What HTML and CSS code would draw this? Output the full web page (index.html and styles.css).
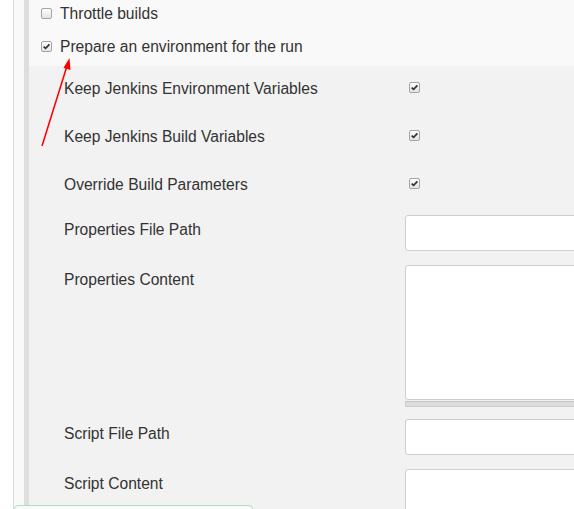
FILE: index.html
```html
<!DOCTYPE html>
<html>
<head>
<meta charset="utf-8">
<link rel="stylesheet" href="styles.css">
</head>
<body>
<div class="outer">
  <div class="panel">
    <div class="section">
      <div class="top-row row-throttle">
        <span class="cb"></span>
        <span class="top-label">Throttle builds</span>
      </div>
      <div class="top-row row-prepare">
        <span class="cb checked"><svg viewBox="0 0 11 11" width="11" height="11"><path d="M2.6 5.6 L4.6 7.4 L8.4 3.4" fill="none" stroke="#333" stroke-width="1.7"/></svg></span>
        <span class="top-label">Prepare an environment for the run</span>
      </div>
      <div class="nested">
        <div class="frow cbrow">
          <div class="flabel">Keep Jenkins Environment Variables</div>
          <div class="fctrl"><span class="cb checked"><svg viewBox="0 0 11 11" width="11" height="11"><path d="M2.6 5.6 L4.6 7.4 L8.4 3.4" fill="none" stroke="#333" stroke-width="1.7"/></svg></span></div>
        </div>
        <div class="frow cbrow">
          <div class="flabel">Keep Jenkins Build Variables</div>
          <div class="fctrl"><span class="cb checked"><svg viewBox="0 0 11 11" width="11" height="11"><path d="M2.6 5.6 L4.6 7.4 L8.4 3.4" fill="none" stroke="#333" stroke-width="1.7"/></svg></span></div>
        </div>
        <div class="frow cbrow">
          <div class="flabel">Override Build Parameters</div>
          <div class="fctrl"><span class="cb checked"><svg viewBox="0 0 11 11" width="11" height="11"><path d="M2.6 5.6 L4.6 7.4 L8.4 3.4" fill="none" stroke="#333" stroke-width="1.7"/></svg></span></div>
        </div>
        <div class="frow inrow">
          <div class="flabel">Properties File Path</div>
          <div class="fctrl"><div class="textbox"></div></div>
        </div>
        <div class="frow inrow tarow">
          <div class="flabel">Properties Content</div>
          <div class="fctrl"><div class="textarea"></div><div class="handle"></div></div>
        </div>
        <div class="frow inrow">
          <div class="flabel">Script File Path</div>
          <div class="fctrl"><div class="textbox"></div></div>
        </div>
        <div class="frow inrow">
          <div class="flabel">Script Content</div>
          <div class="fctrl"><div class="textarea"></div></div>
        </div>
      </div>
    </div>
  </div>
</div>
<div class="savebar"></div>
<svg class="arrow" width="80" height="160" viewBox="0 0 80 160">
  <line x1="42" y1="146" x2="67" y2="66" stroke="#ff0000" stroke-width="1.6"/>
  <polygon points="69.5,58 70.5,70 63.5,67.8" fill="#ff0000"/>
</svg>
</body>
</html>
```
FILE: styles.css
```css
html, body {
  margin: 0;
  padding: 0;
  overflow: hidden;
  background: #ffffff;
}
body {
  font-family: "Liberation Sans", Arial, Helvetica, sans-serif;
  font-size: 15.6px;
  color: #333333;
  width: 574px;
  height: 509px;
  position: relative;
}
.outer {
  padding-left: 13px;
  width: 1000px;
  height: 509px;
  overflow: hidden;
}
.panel {
  border-left: 1px solid #d9d9d9;
  background: #f9f9f9;
  padding-left: 10px;
  min-height: 100%;
}
.section {
  border-left: 5px solid #dedede;
}
.top-row {
  display: flex;
  align-items: center;
  padding-left: 12px;
  background: #f9f9f9;
}
.row-throttle {
  height: 27px;
}
.row-prepare {
  height: 39px;
}
.top-label {
  margin-left: 8px;
}
.cb {
  width: 11px;
  height: 11px;
  box-sizing: border-box;
  border: 1px solid #a4a4a4;
  border-radius: 2px;
  background: linear-gradient(#fdfdfd, #e4e4e4);
  display: inline-flex;
  align-items: center;
  justify-content: center;
  flex: none;
}
.cb svg {
  display: block;
  margin: -1px;
}
.nested {
  background: #f2f2f2;
  padding-left: 35px;
}
.frow {
  display: flex;
}
.flabel {
  width: 341px;
  flex: none;
}
.fctrl {
  flex: 1;
}
.cbrow {
  height: 48px;
}
.cbrow .flabel {
  line-height: 45px;
}
.cbrow .fctrl {
  padding-top: 13px;
  padding-left: 4px;
}
.inrow {
  padding-top: 5px;
  padding-bottom: 9px;
}
.inrow .flabel {
  line-height: 30px;
}
.tarow {
  padding-bottom: 7px;
}
.textbox {
  height: 36px;
  box-sizing: border-box;
  border: 1px solid #cccccc;
  border-radius: 3px;
  background: #ffffff;
}
.textarea {
  height: 135px;
  box-sizing: border-box;
  border: 1px solid #cccccc;
  border-radius: 3px;
  background: #ffffff;
}
.handle {
  margin-top: 1px;
  height: 6px;
  box-sizing: border-box;
  border: 1px solid #cfcfcf;
  border-top-color: #c4c4c4;
  background: #dddddd;
}
.savebar {
  position: absolute;
  left: 14px;
  top: 505px;
  width: 239px;
  height: 30px;
  box-sizing: border-box;
  border: 1px solid #b7dcc6;
  border-radius: 4px;
  background: #f7fbf8;
}
.arrow {
  position: absolute;
  left: 0;
  top: 0;
}
```
